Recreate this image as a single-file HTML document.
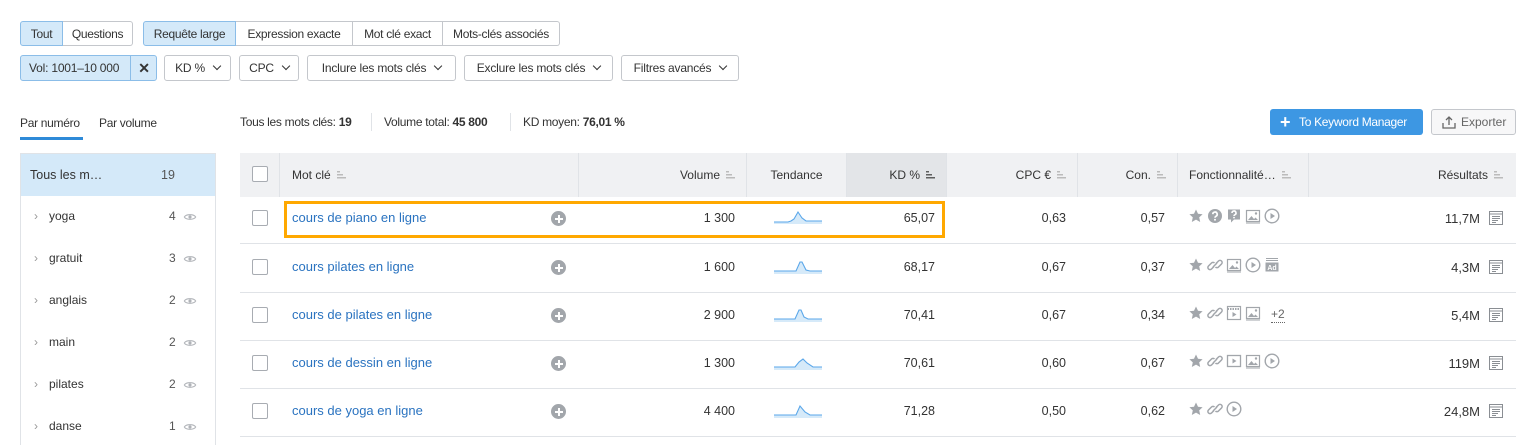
<!DOCTYPE html>
<html><head><meta charset="utf-8">
<style>
*{box-sizing:border-box;margin:0;padding:0}
body{width:1531px;height:445px;overflow:hidden;background:#fff;font-family:"Liberation Sans",sans-serif;font-size:12px;color:#333;position:relative}
.a{position:absolute;white-space:nowrap}
.btn{position:absolute;height:25px;border:1px solid #c4c7cc;border-radius:3px;display:flex;align-items:center;justify-content:center;font-size:12px;color:#333;background:#fff;letter-spacing:-0.2px}
.sel{background:#d4e9f9;border-color:#8bbde8}
.grp{position:absolute;display:flex;height:25px}
.grp div{border:1px solid #c4c7cc;border-left:none;padding:0 8px;display:flex;align-items:center;font-size:12px;letter-spacing:-0.3px}
.grp div:first-child{border-left:1px solid #c4c7cc;border-radius:3px 0 0 3px}
.grp div:last-child{border-radius:0 3px 3px 0}
.grp div.sel{background:#d4e9f9;border-color:#8bbde8}
.chev{display:inline-block;width:6px;height:6px;border-right:1.6px solid #333;border-bottom:1.6px solid #333;transform:rotate(45deg);margin-left:9px;margin-top:-4px}
.side{position:absolute;left:20px;top:153px;width:196px;height:292px;border:1px solid #e0e3e7;border-bottom:none}
.srow{position:absolute;left:0;width:194px;height:42px;font-size:12.5px}
.hline{position:absolute;left:240px;width:1276px;height:1px;background:#e0e3e7}
.th{position:absolute;top:153px;height:44px;background:#f0f1f3;font-size:12px;display:flex;align-items:center;border-right:1px solid #e0e3e7}
.sort{display:inline-block;width:9px;height:8px;margin-left:6px;background:linear-gradient(#bbb,#bbb) 0 0/3px 1.5px no-repeat,linear-gradient(#bbb,#bbb) 0 3px/6px 1.5px no-repeat,linear-gradient(#bbb,#bbb) 0 6px/9px 1.5px no-repeat}
.cb{position:absolute;left:252px;width:16px;height:16px;border:1px solid #a8acb2;border-radius:2px;background:#fff}
.kw{position:absolute;left:292px;color:#2a73c0;font-size:13px}
.plus{position:absolute;left:551px;width:15px;height:15px;border-radius:50%;background:#a2a6ab}
.plus:before{content:"";position:absolute;left:3.5px;top:6.5px;width:8px;height:2px;background:#fff}
.plus:after{content:"";position:absolute;left:6.5px;top:3.5px;width:2px;height:8px;background:#fff}
.num{position:absolute;text-align:right;font-size:12.5px}
.ic{position:absolute;width:16px;height:16px}
</style></head><body>
<svg width="0" height="0" style="position:absolute">
<defs>
<symbol id="star" viewBox="0 0 16 16"><path d="M8 1.5l2 4.3 4.6.5-3.4 3.1 1 4.6L8 11.6 3.8 14l1-4.6L1.4 6.3 6 5.8z" fill="#a2a6ab"/></symbol>
<symbol id="q" viewBox="0 0 16 16"><circle cx="8" cy="8" r="7" fill="#a2a6ab"/><path d="M5.8 6.2a2.2 2.2 0 1 1 3.2 2c-.7.4-1 .8-1 1.5" stroke="#fff" stroke-width="1.7" fill="none"/><circle cx="8" cy="11.8" r="1" fill="#fff"/></symbol>
<symbol id="qb" viewBox="0 0 16 16"><path d="M2 1.5h12v10H8l-3 3v-3H2z" fill="#a2a6ab"/><path d="M6 5a2 2 0 1 1 2.8 1.8c-.6.3-.8.6-.8 1.2" stroke="#fff" stroke-width="1.6" fill="none"/><circle cx="8" cy="9.6" r=".9" fill="#fff"/></symbol>
<symbol id="img" viewBox="0 0 16 16"><rect x="1.5" y="2.5" width="13" height="11" fill="none" stroke="#a2a6ab" stroke-width="1.2"/><path d="M3 12l3.5-4 2.5 3 1.5-1.5L13 12z" fill="#a2a6ab"/><circle cx="11" cy="5.5" r="1.2" fill="#a2a6ab"/><path d="M1 15h14" stroke="#a2a6ab"/></symbol>
<symbol id="play" viewBox="0 0 16 16"><circle cx="8" cy="8" r="6.8" fill="none" stroke="#a2a6ab" stroke-width="1.4"/><path d="M6.5 5v6l4.5-3z" fill="#a2a6ab"/></symbol>
<symbol id="link" viewBox="0 0 16 16"><g fill="none" stroke="#a2a6ab" stroke-width="1.5"><path d="M7 9.5l-2.5 2.5a2 2 0 0 1-3-3L4.5 6a2 2 0 0 1 3 0"/><path d="M9 6.5l2.5-2.5a2 2 0 0 1 3 3L11.5 10a2 2 0 0 1-3 0"/><path d="M6 10l4-4"/></g></symbol>
<symbol id="vid" viewBox="0 0 16 16"><rect x="1.5" y="1.5" width="13" height="13" fill="none" stroke="#a2a6ab" stroke-width="1.2"/><path d="M1.5 4h13" stroke="#a2a6ab" stroke-width="2" stroke-dasharray="1.5 1"/><path d="M6.5 7v5l4-2.5z" fill="#a2a6ab"/></symbol>
<symbol id="vb" viewBox="0 0 16 16"><rect x="1.5" y="2.5" width="13" height="11" fill="none" stroke="#a2a6ab" stroke-width="1.3"/><path d="M6.5 5.5v5l4-2.5z" fill="#a2a6ab"/></symbol>
<symbol id="ad" viewBox="0 0 16 16"><path d="M2 1.5h12M2 3.5h12" stroke="#a2a6ab"/><rect x="1.5" y="5.5" width="13" height="9" fill="#a2a6ab"/><text x="8" y="13" font-size="7" fill="#fff" text-anchor="middle" font-family="Liberation Sans" font-weight="bold">Ad</text></symbol>
<symbol id="serp" viewBox="0 0 16 16"><rect x="1.5" y="1.5" width="13" height="13" fill="none" stroke="#8a8e93" stroke-width="1"/><path d="M1.5 4h13M4 6.5h8M4 8.5h8M4 10.5h6M4 12.5h4" stroke="#8a8e93" stroke-width="0.9"/></symbol>
<symbol id="eye" viewBox="0 0 16 16"><path d="M1.5 8C3.5 4.5 12.5 4.5 14.5 8 12.5 11.5 3.5 11.5 1.5 8z" fill="none" stroke="#b0b3b8" stroke-width="1.2"/><circle cx="8" cy="8" r="1.8" fill="#b0b3b8"/></symbol>
<symbol id="tr1" viewBox="0 0 48 16"><path d="M0 13h14l3-1 3-2 4-7 4 6 4 3h16v3H0z" fill="#d6eaf9"/><path d="M0 13h14l3-1 3-2 4-7 4 6 4 3h16" fill="none" stroke="#5aa7ea" stroke-width="1.1"/></symbol>
<symbol id="tr2" viewBox="0 0 48 16"><path d="M0 13h22l4-9h2l4 8 4 1h12v3H0z" fill="#d6eaf9"/><path d="M0 13h22l4-9h2l4 8 4 1h12" fill="none" stroke="#5aa7ea" stroke-width="1.1"/></symbol>
<symbol id="tr3" viewBox="0 0 48 16"><path d="M0 13h21l4-9h2l3 7 4 2h14v3H0z" fill="#d6eaf9"/><path d="M0 13h21l4-9h2l3 7 4 2h14" fill="none" stroke="#5aa7ea" stroke-width="1.1"/></symbol>
<symbol id="tr4" viewBox="0 0 48 16"><path d="M0 13h21l4-5 4-3 6 6 4 2h9v3H0z" fill="#d6eaf9"/><path d="M0 13h21l4-5 4-3 4 4 6 4h9" fill="none" stroke="#5aa7ea" stroke-width="1.1"/></symbol>
<symbol id="tr5" viewBox="0 0 48 16"><path d="M0 13h22l4-9 5 6 5 3h12v3H0z" fill="#d6eaf9"/><path d="M0 13h22l4-9 5 6 5 3h12" fill="none" stroke="#5aa7ea" stroke-width="1.1"/></symbol>
</defs></svg>

<div class="grp" style="left:20px;top:21px"><div class="sel" style="width:43px;justify-content:center">Tout</div><div style="width:70px;justify-content:center">Questions</div></div>
<div class="grp" style="left:143px;top:21px"><div class="sel" style="width:93px;justify-content:center">Requête large</div><div style="width:117px;justify-content:center">Expression exacte</div><div style="width:90px;justify-content:center">Mot clé exact</div><div style="width:117px;justify-content:center">Mots-clés associés</div></div>

<div class="btn sel" style="left:20px;top:55px;width:137px;height:26px;justify-content:flex-start;padding-left:8px">Vol: 1001–10 000<span style="position:absolute;left:109px;top:0;bottom:0;border-left:1px solid #8bbde8;width:27px;text-align:center;line-height:24px;font-weight:bold;font-size:14px">✕</span></div>
<div class="btn" style="left:164px;top:55px;width:67px;height:26px">KD %<span class="chev"></span></div>
<div class="btn" style="left:239px;top:55px;width:60px;height:26px">CPC<span class="chev"></span></div>
<div class="btn" style="left:307px;top:55px;width:149px;height:26px">Inclure les mots clés<span class="chev"></span></div>
<div class="btn" style="left:464px;top:55px;width:149px;height:26px">Exclure les mots clés<span class="chev"></span></div>
<div class="btn" style="left:621px;top:55px;width:118px;height:26px">Filtres avancés<span class="chev"></span></div>

<div class="a" style="left:20px;top:116px;font-size:12px;letter-spacing:-0.3px">Par numéro</div>
<div class="a" style="left:20px;top:137px;width:63px;height:3px;background:#2e8ad8"></div>
<div class="a" style="left:99px;top:116px;font-size:12px;letter-spacing:-0.3px">Par volume</div>

<div class="a" style="left:240px;top:115px;font-size:12px;letter-spacing:-0.3px">Tous les mots clés: <b>19</b></div>
<div class="a" style="left:371px;top:113px;width:1px;height:18px;background:#e0e3e7"></div>
<div class="a" style="left:384px;top:115px;font-size:12px;letter-spacing:-0.3px">Volume total: <b>45 800</b></div>
<div class="a" style="left:510px;top:113px;width:1px;height:18px;background:#e0e3e7"></div>
<div class="a" style="left:523px;top:115px;font-size:12px;letter-spacing:-0.3px">KD moyen: <b>76,01 %</b></div>

<div class="a" style="left:1270px;top:109px;width:153px;height:26px;background:#3d97e3;border-radius:3px;color:#fff;font-size:12px;letter-spacing:-0.3px;line-height:26px;padding-left:29px">To Keyword Manager<span style="position:absolute;left:10px;top:0;font-size:18px;font-weight:bold">+</span></div>
<div class="a" style="left:1431px;top:109px;width:85px;height:26px;border:1px solid #c4c7cc;border-radius:3px;background:#f7f7f8;color:#666;font-size:12px;line-height:24px;padding-left:29px"><svg style="position:absolute;left:10px;top:5px" width="14" height="14" viewBox="0 0 14 14"><path d="M1 8v5h12V8M7 10V2M4 5l3-3 3 3" fill="none" stroke="#666" stroke-width="1.3"/></svg>Exporter</div>

<div class="side">
<div class="srow" style="top:0;background:#d4e9f9"><span class="a" style="left:9px;top:14px">Tous les m…</span><span class="a" style="left:140px;top:14px;color:#555">19</span></div>
</div>
<div id="sb"></div>

<div class="th" style="left:240px;width:40px"><div class="cb" style="left:12px;top:13px;position:absolute"></div></div>
<div class="th" style="left:280px;width:299px;padding-left:12px">Mot clé<span class="sort"></span></div>
<div class="th" style="left:579px;width:168px;justify-content:flex-end;padding-right:11px">Volume<span class="sort"></span></div>
<div class="th" style="left:747px;width:100px;justify-content:center">Tendance</div>
<div class="th" style="left:847px;width:100px;justify-content:flex-end;padding-right:11px;background:#e3e5e8">KD %<span class="sort" style="filter:brightness(.5)"></span></div>
<div class="th" style="left:947px;width:131px;justify-content:flex-end;padding-right:11px">CPC €<span class="sort"></span></div>
<div class="th" style="left:1078px;width:100px;justify-content:flex-end;padding-right:11px">Con.<span class="sort"></span></div>
<div class="th" style="left:1178px;width:131px;padding-left:11px">Fonctionnalité…<span class="sort"></span></div>
<div class="th" style="left:1309px;width:207px;justify-content:flex-end;padding-right:13px;border-right:none">Résultats<span class="sort"></span></div>

<div class="hline" style="top:243px"></div>
<div class="hline" style="top:292px"></div>
<div class="hline" style="top:340px"></div>
<div class="hline" style="top:388px"></div>
<div class="hline" style="top:436px"></div>

<div class="a" style="left:284px;top:201px;width:661px;height:37px;border:3px solid #ffa800"></div>

<div id="rows"></div>
<script>
var sb=[["yoga",4],["gratuit",3],["anglais",2],["main",2],["pilates",2],["danse",1]];
var h="";
sb.forEach(function(s,i){var y=216+i*42-7;
h+='<div class="a" style="left:34px;top:'+(y)+'px;color:#999;font-size:12px">›</div>';
h+='<div class="a" style="left:49px;top:'+y+'px">'+s[0]+'</div>';
h+='<div class="a" style="left:169px;top:'+y+'px;color:#555">'+s[1]+'</div>';
h+='<svg class="ic" style="left:183px;top:'+(y+1)+'px;width:14px;height:14px"><use href="#eye"/></svg>';});
document.getElementById("sb").innerHTML=h;
var R=[["cours de piano en ligne","1 300","65,07","0,63","0,57",["star","q","qb","img","play"],"11,7M"],
["cours pilates en ligne","1 600","68,17","0,67","0,37",["star","link","img","play","ad"],"4,3M"],
["cours de pilates en ligne","2 900","70,41","0,67","0,34",["star","link","vid","img","+2"],"5,4M"],
["cours de dessin en ligne","1 300","70,61","0,60","0,67",["star","link","vb","img","play"],"119M"],
["cours de yoga en ligne","4 400","71,28","0,50","0,62",["star","link","play"],"24,8M"]];
var cy=[218,267,315,363,411];h="";
R.forEach(function(r,i){var c=cy[i],t=c-7;
h+='<div class="cb" style="top:'+(c-8)+'px"></div>';
h+='<div class="kw" style="top:'+(t-1)+'px">'+r[0]+'</div>';
h+='<div class="plus" style="top:'+(c-7)+'px"></div>';
h+='<div class="num" style="left:600px;width:135px;top:'+t+'px">'+r[1]+'</div>';
h+='<svg style="position:absolute;left:774px;top:'+(c-9)+'px" width="48" height="16"><use href="#tr'+(i+1)+'"/></svg>';
h+='<div class="num" style="left:800px;width:135px;top:'+t+'px">'+r[2]+'</div>';
h+='<div class="num" style="left:930px;width:136px;top:'+t+'px">'+r[3]+'</div>';
h+='<div class="num" style="left:1030px;width:135px;top:'+t+'px">'+r[4]+'</div>';
r[5].forEach(function(f,j){var x=1188+j*19;
if(f=="+2")h+='<div class="a" style="left:'+(x+7)+'px;top:'+(t-1)+'px;color:#666;border-bottom:1px dotted #666;line-height:15px">+2</div>';
else h+='<svg class="ic" style="left:'+x+'px;top:'+(c-10)+'px"><use href="#'+f+'"/></svg>';});
h+='<div class="num" style="left:1350px;width:130px;top:'+t+'px;font-size:13px">'+r[6]+'</div>';
h+='<svg class="ic" style="left:1488px;top:'+(c-8)+'px"><use href="#serp"/></svg>';});
document.getElementById("rows").innerHTML=h;
</script>
</body></html>
